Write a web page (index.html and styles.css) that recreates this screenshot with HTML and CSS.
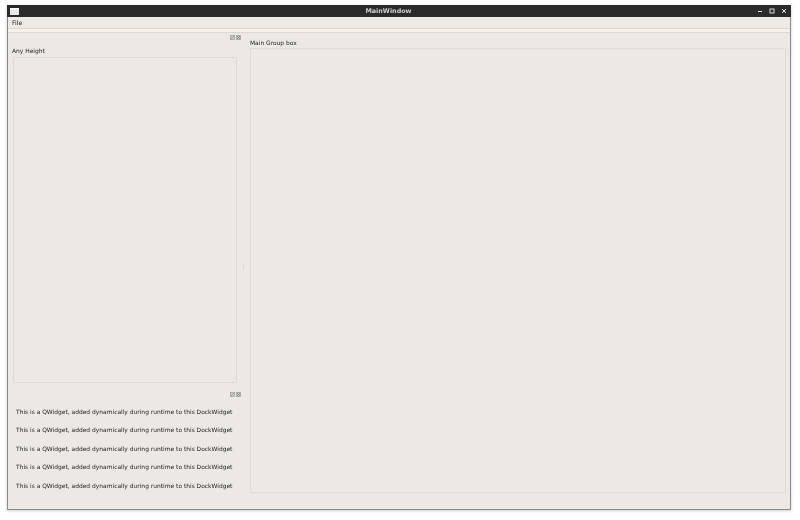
FILE: index.html
```html
<!DOCTYPE html>
<html lang="en">
<head>
<meta charset="utf-8">
<title>MainWindow</title>
<link rel="stylesheet" href="styles.css">
</head>
<body>
<div class="window">
  <header class="titlebar">
    <svg class="app-icon" width="9" height="7" viewBox="0 0 9 7"><rect width="9" height="7" fill="#e8e8ea"/><rect width="9" height="1.5" fill="#ffffff"/></svg>
    <span class="title">MainWindow</span>
    <div class="wm-buttons">
      <svg width="6" height="6" viewBox="0 0 6 6"><path d="M1 3.5H5" stroke="#e6e6e6" stroke-width="1"/></svg>
      <svg width="6" height="6" viewBox="0 0 6 6"><rect x="1" y="1" width="4" height="4" fill="none" stroke="#d8d8d8" stroke-width="1"/></svg>
      <svg width="6" height="6" viewBox="0 0 6 6"><path d="M1 1L5 5M5 1L1 5" stroke="#e6e6e6" stroke-width="1"/></svg>
    </div>
  </header>
  <nav class="menubar"><span class="menu-item">File</span></nav>
  <div class="toolbar-strip"></div>
  <main class="content">
    <aside class="docks">
      <section class="dock dock-top">
        <div class="dock-title">
          <svg class="dock-btn" width="5" height="5" viewBox="0 0 5 5"><rect x=".5" y=".5" width="4" height="4" fill="#cfcdc9" stroke="#a3a19d" stroke-width=".8"/><path d="M1 4L4 1" stroke="#8a8a8a" stroke-width=".6"/></svg>
          <svg class="dock-btn" width="5" height="5" viewBox="0 0 5 5"><rect x=".5" y=".5" width="4" height="4" fill="#cfcdc9" stroke="#a3a19d" stroke-width=".8"/><path d="M1 1L4 4M4 1L1 4" stroke="#777" stroke-width=".7"/></svg>
        </div>
        <div class="label group-label">Any Height</div>
        <div class="frame frame-left"></div>
      </section>
      <section class="dock dock-bottom">
        <div class="dock-title">
          <svg class="dock-btn" width="5" height="5" viewBox="0 0 5 5"><rect x=".5" y=".5" width="4" height="4" fill="#cfcdc9" stroke="#a3a19d" stroke-width=".8"/><path d="M1 4L4 1" stroke="#8a8a8a" stroke-width=".6"/></svg>
          <svg class="dock-btn" width="5" height="5" viewBox="0 0 5 5"><rect x=".5" y=".5" width="4" height="4" fill="#cfcdc9" stroke="#a3a19d" stroke-width=".8"/><path d="M1 1L4 4M4 1L1 4" stroke="#777" stroke-width=".7"/></svg>
        </div>
        <ul class="rows">
          <li class="label">This is a QWidget, added dynamically during runtime to this DockWidget</li>
          <li class="label">This is a QWidget, added dynamically during runtime to this DockWidget</li>
          <li class="label">This is a QWidget, added dynamically during runtime to this DockWidget</li>
          <li class="label">This is a QWidget, added dynamically during runtime to this DockWidget</li>
          <li class="label">This is a QWidget, added dynamically during runtime to this DockWidget</li>
        </ul>
      </section>
    </aside>
    <div class="splitter"><span class="grip"></span></div>
    <section class="central">
      <div class="label group-label">Main Group box</div>
      <div class="frame frame-main"></div>
    </section>
  </main>
</div>
</body>
</html>
```
FILE: styles.css
```css
* { box-sizing: border-box; }
html, body { margin: 0; height: 100%; background: #fff; }
body {
  padding: 5px 9px 10px 7px;
  font-family: "DejaVu Sans", sans-serif;
  font-size: 5.95px;
  color: #1c1e1f;
}
.window {
  height: 505px;
  display: flex;
  flex-direction: column;
  background: #ece9e4;
  border: 1px solid #8c8a87;
  border-top: 0;
  box-shadow: 0 1px 3px rgba(0,0,0,.2);
}
.titlebar {
  flex: 0 0 12px;
  margin: 0 -1px;
  background: #2b2b2b;
  display: flex;
  align-items: center;
  padding: 0 4px 0 3px;
  position: relative;
}
.app-icon { display: block; }
.title {
  position: absolute;
  left: 0; right: 21px;
  text-align: center;
  color: #cfcfcf;
  font-weight: bold;
  font-size: 6.4px;
  line-height: 12px;
  filter: grayscale(1);
}
.wm-buttons { margin-left: auto; display: flex; gap: 6px; }
.wm-buttons svg { display: block; }
.menubar {
  flex: 0 0 11px;
  display: flex;
  align-items: center;
  padding-left: 4px;
  background: #eeebe6;
  font-size: 6.2px;
}
.menu-item { filter: grayscale(1); }
.toolbar-strip {
  flex: 0 0 5px;
  background: #f5f2ec;
  border-top: 1px solid #dbd8d2;
  border-bottom: 1px solid #dcd9d4;
}
.content { flex: 1; display: flex; min-height: 0; }
.docks {
  flex: 0 0 233px;
  min-width: 0;
  display: flex;
  flex-direction: column;
}
.dock-title {
  display: flex;
  justify-content: flex-end;
  gap: 1px;
  height: 5px;
}
.dock-btn { display: block; }
.dock-top { padding: 2px 0 0 4px; height: 356px; display: flex; flex-direction: column; }
.label { line-height: 8px; white-space: nowrap; filter: grayscale(1); }
.group-label { margin-top: 7px; }
.frame { border: 1px solid #dedbd6; border-radius: 1px; }
.frame-left { flex: 0 0 326px; margin: 2px 0 0 1px; width: 224px; }
.dock-bottom { padding: 3px 0 0 4px; }
.rows { list-style: none; margin: 11px 0 0; padding: 0 0 0 4px; display: flex; flex-direction: column; gap: 10.4px; }
.splitter { flex: 0 0 9px; display: flex; align-items: center; justify-content: flex-start; padding: 0 0 10px 2px; }
.grip { width: 1px; height: 7px; background: #dcd9d4; }
.central { flex: 1; display: flex; flex-direction: column; padding: 0 4px 16px 0; }
.central .group-label { margin-top: 6px; }
.frame-main { flex: 1; margin-top: 1px; }
```
